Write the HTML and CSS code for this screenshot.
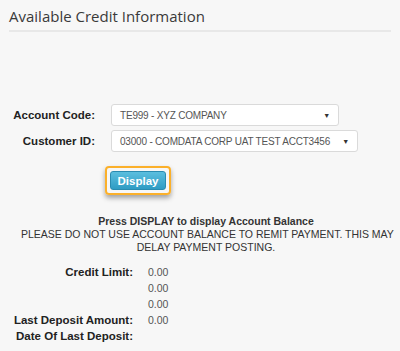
FILE: index.html
```html
<html>
    <head>
        <title>Available Credit Information</title>
        <link rel="stylesheet" href="styles.css">
    </head>
    <body>
        <div class="page">
            <h1 class="title">Available Credit Information</h1>
            <div class="form">
                <label class="label" for="account_code">Account Code:</label>
                <div class="select account">
                    <span>TE999 - XYZ COMPANY</span>
                    <span class="caret">&#9660;</span>
                </div>
                <label class="label" for="customer_id">Customer ID:</label>
                <div class="select customer">
                    <span>03000 - COMDATA CORP UAT TEST ACCT3456</span>
                    <span class="caret">&#9660;</span>
                </div>
                <div></div>
                <div class="button_row">
                    <span class="focus_ring"><button class="display_button">Display</button></span>
                </div>
            </div>
            <div class="notice">
                <strong>Press DISPLAY to display Account Balance</strong><br />
                PLEASE DO NOT USE ACCOUNT BALANCE TO REMIT PAYMENT. THIS MAY<br />
                DELAY PAYMENT POSTING.
            </div>
            <div class="balance">
                <span class="label">Credit Limit:</span><span class="value">0.00</span>
                <span class="label"></span><span class="value">0.00</span>
                <span class="label"></span><span class="value">0.00</span>
                <span class="label">Last Deposit Amount:</span><span class="value">0.00</span>
                <span class="label">Date Of Last Deposit:</span><span class="value"></span>
            </div>
        </div>
    </body>
</html>
```

FILE: styles.css
```css
body {
    margin: 0px;
    padding: 0px;
    background-color: #f7f7f7;
    font-family: 'Liberation Sans', Arial, sans-serif;
    color: #333;
}

.page {
    padding: 0px 9px;
}

.title {
    margin: 0px;
    padding: 6px 0px 4px 0px;
    font-family: 'Open Sans', sans-serif;
    font-weight: normal;
    font-size: 15px;
    line-height: 20px;
    color: #3a3a3a;
    border-bottom: 2px solid #e8e8e8;
}

.form {
    display: grid;
    grid-template-columns: 86px auto;
    column-gap: 16px;
    row-gap: 4px;
    margin-top: 72px;
    align-items: center;
}

.label {
    text-align: right;
    font-weight: bold;
    font-size: 11.5px;
    color: #222;
    white-space: nowrap;
}

.select {
    display: flex;
    justify-content: space-between;
    align-items: center;
    height: 20px;
    padding: 0px 8px;
    background-color: white;
    border: 1px solid #dadada;
    border-radius: 3px;
    font-size: 10px;
    letter-spacing: -0.2px;
    color: #555;
    white-space: nowrap;
}

.select.account {
    width: 210px;
}

.select.customer {
    width: 229px;
}

.caret {
    font-size: 7px;
    color: #333;
}

.button_row {
    padding-top: 10px;
    margin-left: -6px;
}

.focus_ring {
    display: inline-block;
    padding: 3px;
    border: 2px solid #fbb02a;
    border-radius: 4px;
    box-shadow: 0px 3px 5px rgba(0, 0, 0, 0.35);
}

.display_button {
    display: block;
    width: 56px;
    height: 19px;
    padding: 0px;
    border: 1px solid #2a8bb0;
    border-radius: 3px;
    background: linear-gradient(#5bbede, #2f9cc4);
    color: white;
    font-family: 'Liberation Sans', Arial, sans-serif;
    font-weight: bold;
    font-size: 11.5px;
}

.notice {
    margin-top: 20px;
    padding-left: 12px;
    text-align: center;
    font-size: 10.5px;
    line-height: 13px;
    color: #333;
    white-space: nowrap;
}

.balance {
    display: grid;
    grid-template-columns: 124px auto;
    column-gap: 15px;
    margin-top: 10px;
    font-size: 10.5px;
    line-height: 16px;
}

.balance .label {
    font-size: 11.5px;
}

.balance .value {
    color: #555;
    min-height: 16px;
}
```
